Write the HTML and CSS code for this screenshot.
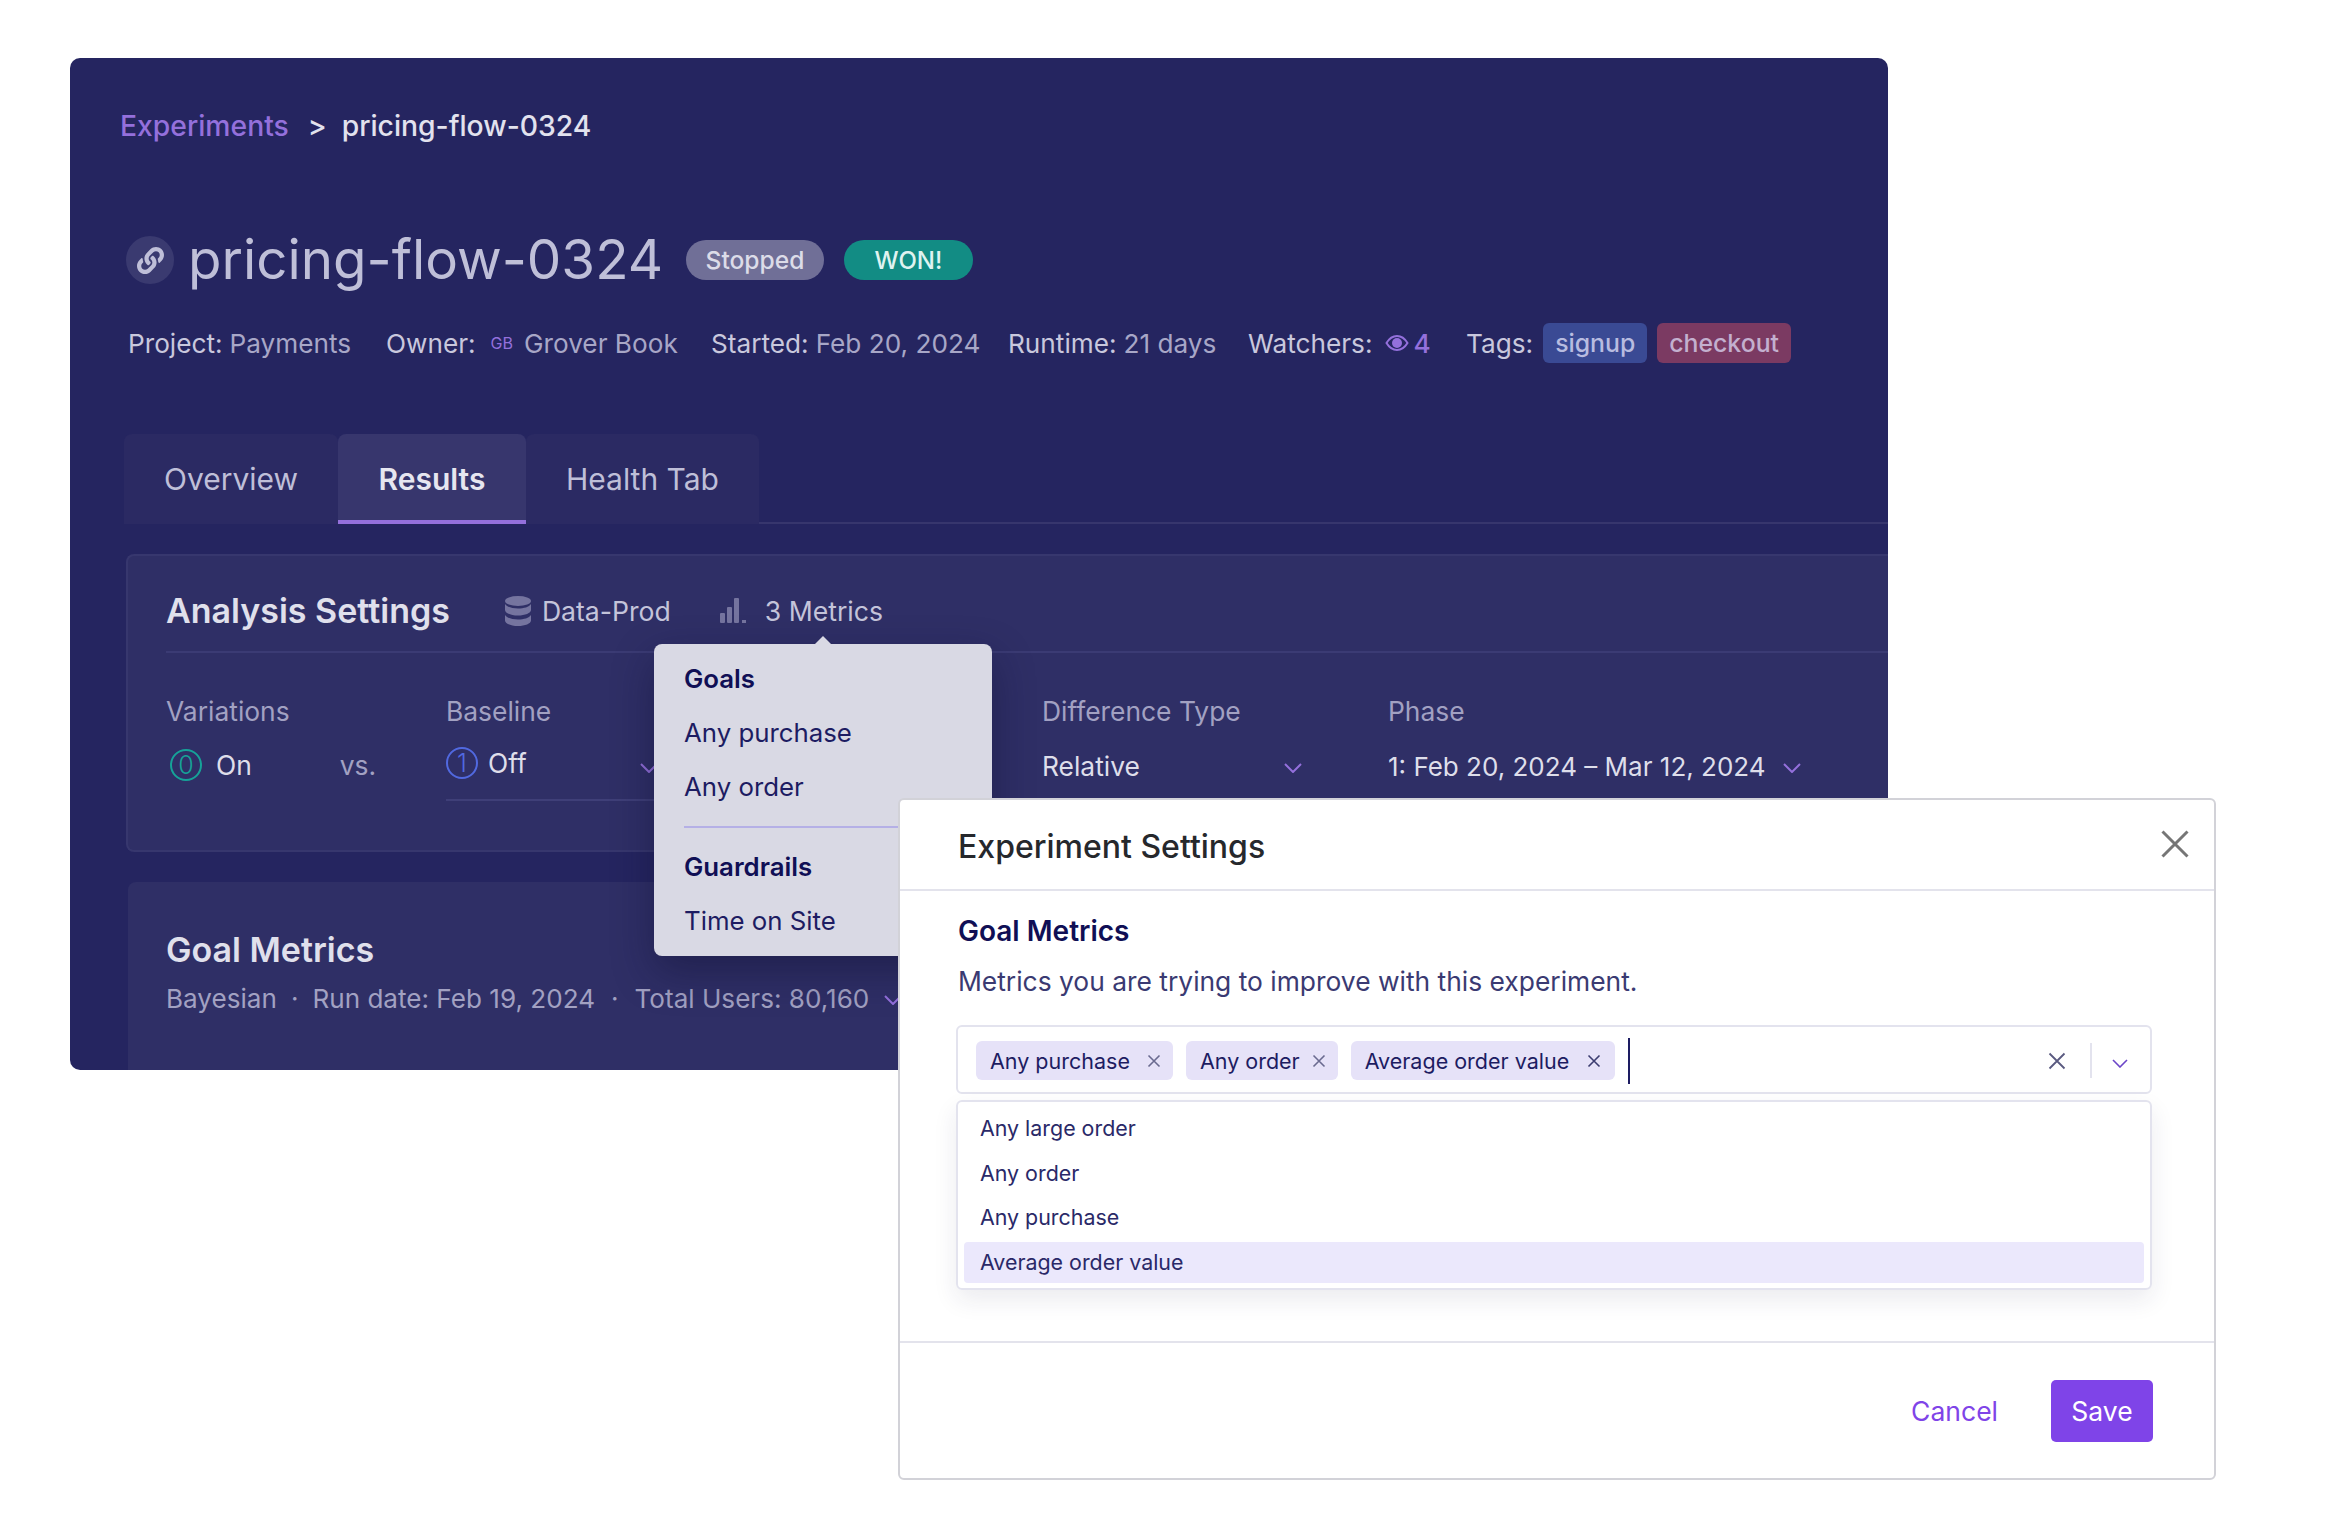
FILE: index.html
```html
<!DOCTYPE html>
<html lang="en">
<head>
    <meta charset="UTF-8">
    <title>Experiment Settings</title>
    <link rel="stylesheet" href="styles.css">
</head>
<body>
<div class="page">
    <div class="panel">
        <div class="crumbs">
            <span class="crumb-link">Experiments</span>
            <span class="crumb-sep">&gt;</span>
            <span class="crumb-current">pricing-flow-0324</span>
        </div>

        <div class="title-row">
            <span class="link-icon">
                <svg width="27" height="27" viewBox="0 0 512 512" fill="#bfbfd8">
                    <path d="M326.612 185.391c59.747 59.809 58.927 155.698.36 214.59-.11.12-.24.25-.36.37l-67.2 67.2c-59.27 59.27-155.699 59.262-214.96 0-59.27-59.26-59.27-155.7 0-214.96l37.106-37.106c9.84-9.84 26.786-3.3 27.294 10.606.648 17.722 3.826 35.527 9.69 52.721 1.986 5.822.567 12.262-3.783 16.612l-13.087 13.087c-28.026 28.026-28.905 73.66-1.155 101.96 28.024 28.579 74.086 28.749 102.325.51l67.2-67.19c28.191-28.191 28.073-73.757 0-101.83-3.701-3.694-7.429-6.564-10.341-8.569a16.037 16.037 0 0 1-6.947-12.606c-.396-10.567 3.348-21.456 11.698-29.806l21.054-21.055c5.521-5.521 14.182-6.199 20.584-1.731a152.482 152.482 0 0 1 20.522 17.197zM467.547 44.449c-59.261-59.262-155.69-59.27-214.96 0l-67.2 67.2c-.12.12-.25.25-.36.37-58.566 58.892-59.387 154.781.36 214.59a152.454 152.454 0 0 0 20.521 17.196c6.402 4.468 15.064 3.789 20.584-1.731l21.054-21.055c8.35-8.35 12.094-19.239 11.698-29.806a16.037 16.037 0 0 0-6.947-12.606c-2.912-2.005-6.64-4.875-10.341-8.569-28.073-28.073-28.191-73.639 0-101.83l67.2-67.19c28.239-28.239 74.3-28.069 102.325.51 27.75 28.3 26.872 73.934-1.155 101.96l-13.087 13.087c-4.35 4.35-5.769 10.79-3.783 16.612 5.864 17.194 9.042 34.999 9.69 52.721.509 13.906 17.454 20.446 27.294 10.606l37.106-37.106c59.271-59.259 59.271-155.699.001-214.959z"/>
                </svg>
            </span>
            <h1>pricing-flow-0324</h1>
            <span class="badge badge-stopped">Stopped</span>
            <span class="badge badge-won">WON!</span>
        </div>

        <div class="meta-row">
            <span class="meta-project"><b>Project:</b> Payments</span>
            <span class="meta-owner"><b>Owner:</b><i class="initials">GB</i>Grover Book</span>
            <span class="meta-started"><b>Started:</b> Feb 20, 2024</span>
            <span class="meta-runtime"><b>Runtime:</b> 21 days</span>
            <span class="meta-watchers"><b>Watchers:</b>
                <svg class="eye" width="24" height="18" viewBox="0 0 24 18" fill="none">
                    <path d="M1.5 9C4.5 4 8 2 12 2s7.5 2 10.5 7c-3 5-6.500 7-10.500 7S4.500 14 1.500 9z" stroke="#9470dc" stroke-width="2"/>
                    <circle cx="12" cy="9" r="5" fill="#9470dc"/>
                </svg><em>4</em></span>
            <span class="meta-tags"><b>Tags:</b><span class="tag tag-signup">signup</span><span class="tag tag-checkout">checkout</span></span>
        </div>

        <div class="tabs">
            <div class="tab tab-overview">Overview</div>
            <div class="tab tab-results">Results</div>
            <div class="tab tab-health">Health Tab</div>
        </div>

        <div class="card analysis-card">
            <div class="card-head">
                <h2>Analysis Settings</h2>
                <span class="head-item head-data">
                    <svg width="26" height="30" viewBox="0 0 26 30" fill="#75749f">
                        <ellipse cx="13" cy="5" rx="13" ry="5"/>
                        <path d="M0 8c2 3 7 4.500 13 4.500S24 11 26 8v6c0 3-6 5.500-13 5.500S0 17 0 14z"/>
                        <path d="M0 19c2 3 7 4.500 13 4.500S24 22 26 19v5.500c0 3-6 5.500-13 5.500S0 27.500 0 24.500z"/>
                    </svg>
                    Data-Prod
                </span>
                <span class="head-item head-metrics">
                    <svg width="26" height="26" viewBox="0 0 26 26" fill="#75749f">
                        <rect x="0" y="15" width="5" height="10" rx="1"/>
                        <rect x="7" y="9" width="5" height="16" rx="1"/>
                        <rect x="14" y="0" width="5" height="25" rx="1"/>
                        <rect x="22" y="22" width="4" height="3"/>
                    </svg>
                    3 Metrics
                </span>
            </div>
            <div class="fields">
                <div class="field">
                    <div class="field-label">Variations</div>
                    <div class="field-value">
                        <span class="var-num var-zero">0</span>
                        <span class="var-name">On</span>
                        <span class="vs">vs.</span>
                    </div>
                </div>
                <div class="field">
                    <div class="field-label">Baseline</div>
                    <div class="field-value baseline-value">
                        <span class="var-num var-one">1</span>
                        <span class="var-name var-off">Off</span>
                        <svg class="chev" width="18" height="10" viewBox="0 0 18 10" fill="none" stroke="#9470dc" stroke-width="2"><path d="M1 1l8 8 8-8"/></svg>
                    </div>
                </div>
                <div class="field">
                    <div class="field-label">Difference Type</div>
                    <div class="field-value diff-value">
                        Relative
                        <svg class="chev" width="18" height="10" viewBox="0 0 18 10" fill="none" stroke="#9470dc" stroke-width="2"><path d="M1 1l8 8 8-8"/></svg>
                    </div>
                </div>
                <div class="field">
                    <div class="field-label">Phase</div>
                    <div class="field-value phase-value">
                        1: Feb 20, 2024 – Mar 12, 2024
                        <svg class="chev" width="18" height="10" viewBox="0 0 18 10" fill="none" stroke="#9470dc" stroke-width="2"><path d="M1 1l8 8 8-8"/></svg>
                    </div>
                </div>
            </div>
        </div>

        <div class="card goal-card">
            <h2>Goal Metrics</h2>
            <div class="goal-sub">
                <span>Bayesian</span><span class="dot">·</span>
                <span>Run date: Feb 19, 2024</span><span class="dot dot-wide">·</span>
                <span>Total Users: 80,160</span>
                <svg class="chev" width="18" height="10" viewBox="0 0 18 10" fill="none" stroke="#9470dc" stroke-width="2"><path d="M1 1l8 8 8-8"/></svg>
            </div>
        </div>
    </div>

    <!-- metrics popover, hangs off "3 Metrics" -->
    <div class="popover">
        <div class="pop-title">Goals</div>
        <div class="pop-item">Any purchase</div>
        <div class="pop-item">Any order</div>
        <div class="pop-line"></div>
        <div class="pop-title">Guardrails</div>
        <div class="pop-item">Time on Site</div>
    </div>

    <div class="modal">
        <div class="modal-head">
            <h3>Experiment Settings</h3>
            <svg class="modal-close" width="28" height="28" viewBox="0 0 28 28" stroke="#767676" stroke-width="3" fill="none"><path d="M1.500 1.500l25 25M26.500 1.500l-25 25"/></svg>
        </div>
        <div class="modal-body">
            <div class="modal-label">Goal Metrics</div>
            <div class="modal-desc">Metrics you are trying to improve with this experiment.</div>

            <div class="select-box">
                <span class="chip">Any purchase<svg width="14" height="14" viewBox="0 0 14 14" stroke="#6a6a90" stroke-width="1.600"><path d="M1.500 1.500l11 11M12.500 1.500l-11 11"/></svg></span>
                <span class="chip chip-short">Any order<svg width="14" height="14" viewBox="0 0 14 14" stroke="#6a6a90" stroke-width="1.600"><path d="M1.500 1.500l11 11M12.500 1.500l-11 11"/></svg></span>
                <span class="chip chip-long">Average order value<svg width="14" height="14" viewBox="0 0 14 14" stroke="#3c3c70" stroke-width="1.600"><path d="M1.500 1.500l11 11M12.500 1.500l-11 11"/></svg></span>
                <span class="caret"></span>
                <svg class="select-clear" width="18" height="18" viewBox="0 0 18 18" stroke="#5a5a80" stroke-width="1.800"><path d="M1.500 1.500l15 15M16.500 1.500l-15 15"/></svg>
                <span class="select-sep"></span>
                <svg class="select-chev" width="16" height="9" viewBox="0 0 16 9" fill="none" stroke="#6b45c8" stroke-width="1.600"><path d="M1 1l7 7 7-7"/></svg>
            </div>

            <div class="dropdown">
                <div class="drop-item">Any large order</div>
                <div class="drop-item">Any order</div>
                <div class="drop-item">Any purchase</div>
                <div class="drop-item active">Average order value</div>
            </div>
        </div>
        <div class="modal-foot">
            <span class="btn-cancel">Cancel</span>
            <span class="btn-save">Save</span>
        </div>
    </div>
</div>
</body>
</html>
```

FILE: styles.css
```css
* {
    box-sizing: border-box;
}

body {
    margin: 0;
    background-color: #fff;
    font-family: Inter, "Liberation Sans", sans-serif;
}

.page {
    position: relative;
    height: 1540px;
    overflow: hidden;
}

/* Dark experiment page in the back */
.panel {
    margin: 58px 0 0 70px;
    width: 1818px;
    height: 1012px;
    background-color: #252560;
    border-radius: 10px;
    overflow: hidden;
    padding-top: 48px;
}

.crumbs {
    display: flex;
    align-items: center;
    height: 40px;
    padding-left: 50px;
    font-size: 28.300px;
    font-weight: 500;
}

.crumb-link {
    color: #9470dc;
}

.crumb-sep {
    color: #e2e2ee;
    margin: 0 15px 0 19px;
}

.crumb-current {
    color: #e2e2ee;
}

.title-row {
    display: flex;
    align-items: center;
    height: 60px;
    margin-top: 84px;
    padding-left: 56px;
}

.link-icon {
    display: flex;
    align-items: center;
    justify-content: center;
    width: 48px;
    height: 48px;
    border-radius: 50%;
    background-color: #3a3a70;
    margin-right: 14px;
}

h1 {
    margin: 0 23px 2px 0;
    font-size: 54.700px;
    font-weight: 400;
    color: #bfbfd8;
}

.badge {
    display: flex;
    align-items: center;
    justify-content: center;
    height: 40px;
    border-radius: 20px;
    font-size: 24.600px;
    font-weight: 500;
}

.badge-stopped {
    width: 138px;
    margin-right: 20px;
    background-color: #706f97;
    color: #dcdce8;
}

.badge-won {
    width: 129px;
    background-color: #128c84;
    color: #dff3f0;
    font-size: 24px;
}

.meta-row {
    display: flex;
    align-items: center;
    height: 42px;
    margin-top: 32px;
    padding-left: 58px;
    font-size: 26.200px;
    color: #a8a7c7;
    white-space: nowrap;
}

.meta-row > span {
    display: flex;
    align-items: center;
}

.meta-row b {
    font-weight: 400;
    color: #c9c8dd;
    margin-right: 7px;
}

.meta-project { width: 258px; }
.meta-owner { width: 325px; }
.meta-started { width: 297px; }
.meta-runtime { width: 240px; }
.meta-watchers { width: 218px; }

.meta-row .meta-owner b {
    margin-right: 0;
}

.initials {
    font-style: normal;
    font-size: 16px;
    color: #9470dc;
    margin: 0 11px 0 15px;
}

.eye {
    margin: 0 4px 0 6px;
}

.meta-row em {
    font-style: normal;
    font-weight: 500;
    color: #9470dc;
}

.tag {
    display: flex;
    align-items: center;
    height: 40px;
    padding: 0 12px;
    border-radius: 6px;
    font-weight: 500;
    font-size: 24.800px;
}

.tag-signup {
    background-color: #3a4a94;
    color: #b8bce0;
    margin: 0 10px 0 3px;
}

.tag-checkout {
    background-color: #7b3a62;
    color: #c3b0cf;
}

.tabs {
    display: flex;
    height: 90px;
    margin: 70px 0 0 54px;
    border-bottom: 2px solid #37366d;
}

.tab {
    display: flex;
    align-items: center;
    justify-content: center;
    height: 90px;
    border-radius: 8px 8px 0 0;
    background-color: #2b2a63;
    font-size: 30px;
    color: #bfbfd8;
}

.tab-overview { width: 214px; }
.tab-health { width: 233px; }

.tab-results {
    width: 188px;
    padding-top: 4px;
    background-color: #37366d;
    border-bottom: 4px solid #9470dc;
    color: #e6e6f0;
    font-weight: 600;
}

.card {
    background-color: #2f2f66;
    border-radius: 8px 0 0 8px;
}

.analysis-card {
    height: 298px;
    margin: 30px 0 0 56px;
    border: 2px solid #37376e;
    border-right: none;
    padding-left: 38px;
}

.card h2 {
    margin: 0;
    font-size: 34px;
    font-weight: 600;
    color: #e0e0ec;
}

.card-head {
    display: flex;
    align-items: center;
    height: 97px;
    padding-top: 14px;
    border-bottom: 2px solid #3b3b74;
}

.head-item {
    display: flex;
    align-items: center;
    font-size: 26.600px;
    color: #c4c4da;
}

.head-data {
    margin-left: 55px;
    gap: 11px;
}

.head-metrics {
    margin-left: 49px;
    gap: 19px;
}

.fields {
    display: grid;
    grid-template-columns: 280px 596px 346px auto;
    padding-top: 40px;
}

.field-label {
    height: 36px;
    line-height: 36px;
    font-size: 26.400px;
    color: #a2a1c2;
}

.field-value {
    display: flex;
    align-items: center;
    height: 48px;
    margin-top: 12px;
    font-size: 26.400px;
    color: #dedeea;
}

.var-num {
    display: flex;
    align-items: center;
    justify-content: center;
    width: 32px;
    height: 32px;
    border-radius: 50%;
    border: 2px solid;
    font-size: 25px;
    font-weight: 300;
}

.var-zero {
    margin-left: 4px;
    color: #16a298;
}

.var-one {
    color: #5169e0;
}

.var-name {
    margin-left: 14px;
}

.var-name.var-off {
    margin-left: 10px;
}

.vs {
    margin-left: 88px;
    color: #a2a1c2;
}

.baseline-value {
    width: 212px;
    height: 61px;
    margin-top: 11px;
    padding-bottom: 14px;
    border-bottom: 2px solid #3f3f78;
}

.baseline-value .chev {
    margin-left: auto;
    margin-top: 10px;
}

.diff-value {
    justify-content: space-between;
    width: 260px;
    margin-top: 13px;
}

.phase-value {
    gap: 17px;
    margin-top: 13px;
    font-size: 26px;
}

.chev {
    flex: none;
    margin-top: 4px;
}

.goal-card {
    height: 300px;
    margin: 30px 0 0 58px;
    padding: 46px 0 0 38px;
}

.goal-card h2 {
    line-height: 44px;
}

.goal-sub {
    display: flex;
    align-items: center;
    height: 36px;
    margin-top: 8px;
    font-size: 26.100px;
    color: #a2a1c2;
    white-space: nowrap;
}

.goal-sub .dot {
    margin: 0 14px;
}

.goal-sub .dot-wide {
    margin: 0 16px;
}

.goal-sub .chev {
    margin-left: 15px;
}

/* Popover under the metrics count */
.popover {
    position: absolute;
    left: 654px;
    top: 644px;
    width: 338px;
    height: 312px;
    padding: 15px 30px 0;
    background-color: #d9d9e4;
    border-radius: 8px;
    box-shadow: 0 16px 40px rgba(15, 15, 50, 0.45);
    font-size: 25.800px;
    color: #1d1c62;
}

.popover::before {
    content: "";
    position: absolute;
    left: 160px;
    top: -8px;
    border-left: 9px solid transparent;
    border-right: 9px solid transparent;
    border-bottom: 9px solid #d9d9e4;
}

.pop-title,
.pop-item {
    height: 40px;
    line-height: 40px;
    margin-bottom: 14px;
}

.pop-title {
    font-weight: 600;
    color: #100f55;
}

.pop-line {
    height: 2px;
    margin: 19px 0 19px;
    background-color: #b5b0e6;
}

/* Settings dialog on top */
.modal {
    position: absolute;
    left: 898px;
    top: 798px;
    width: 1318px;
    height: 682px;
    display: flex;
    flex-direction: column;
    background-color: #fff;
    border: 2px solid #d2d2d8;
    border-radius: 6px;
}

.modal-head {
    display: flex;
    align-items: center;
    justify-content: space-between;
    flex: none;
    height: 91px;
    padding: 0 25px 0 58px;
    border-bottom: 2px solid #e3e3ec;
}

.modal-head h3 {
    margin: 4px 0 0;
    font-size: 32px;
    font-weight: 500;
    color: #26282c;
}

.modal-close {
    margin-bottom: 2px;
}

.modal-body {
    flex: 1;
    padding: 22px 62px 0 56px;
    border-bottom: 2px solid #e3e3ec;
}

.modal-label {
    height: 36px;
    line-height: 36px;
    padding-left: 2px;
    font-size: 28px;
    font-weight: 600;
    color: #100f55;
}

.modal-desc {
    height: 36px;
    line-height: 36px;
    margin-top: 14px;
    padding-left: 2px;
    font-size: 26.400px;
    color: #3a3a72;
}

.select-box {
    display: flex;
    align-items: center;
    height: 69px;
    margin-top: 26px;
    padding: 2px 0 0 18px;
    border: 2px solid #e3e3ee;
    border-radius: 6px;
}

.chip {
    display: flex;
    align-items: center;
    height: 39px;
    padding: 0 12px 0 14px;
    margin-right: 13px;
    border-radius: 6px;
    background-color: #e6e2f8;
    font-size: 21.500px;
    color: #1d1c62;
}

.chip svg {
    margin-left: 17px;
}

.chip.chip-short svg {
    margin-left: 12px;
}

.chip.chip-long {
    padding-right: 14px;
}

.chip.chip-long svg {
    margin-left: 18px;
}

.caret {
    width: 2px;
    height: 46px;
    background-color: #1d1c62;
}

.select-clear {
    margin-left: auto;
}

.select-sep {
    width: 2px;
    height: 35px;
    margin: 0 20px 0 24px;
    background-color: #e3e3ee;
}

.select-chev {
    margin: 5px 22px 0 0;
}

.dropdown {
    height: 190px;
    margin-top: 6px;
    padding: 4px 6px;
    border: 2px solid #e3e3ee;
    border-radius: 6px;
    box-shadow: 0 10px 24px rgba(30, 30, 80, 0.09);
}

.drop-item {
    height: 44.500px;
    padding-left: 16px;
    display: flex;
    align-items: center;
    border-radius: 4px;
    font-size: 21.400px;
    color: #2a2968;
}

.drop-item.active {
    height: 41px;
    margin-top: 2px;
    background-color: #ebe8fc;
}

.modal-foot {
    display: flex;
    align-items: center;
    justify-content: flex-end;
    flex: none;
    height: 135px;
    padding-right: 61px;
    gap: 53px;
    font-size: 26.500px;
}

.btn-cancel {
    color: #7f44e8;
}

.btn-save {
    display: flex;
    align-items: center;
    justify-content: center;
    width: 102px;
    height: 62px;
    border-radius: 5px;
    background-color: #7f44e8;
    color: #fff;
}
```
